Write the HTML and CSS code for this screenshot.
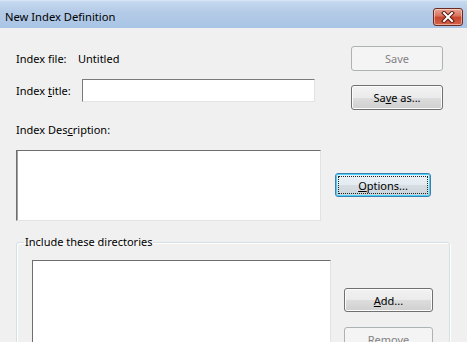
FILE: index.html
```html
<!DOCTYPE html>
<html>
<head>
<meta charset="utf-8">
<link rel="stylesheet" href="styles.css">
</head>
<body>
<div class="window">
  <div class="titlebar">
    <span class="title">New Index Definition</span>
    <span class="close">
      <svg width="18" height="12" viewBox="0 0 18 12">
        <path d="M5 2 L13 10 M13 2 L5 10" stroke="#5a1a10" stroke-width="4" stroke-linecap="square"/>
        <path d="M5 2 L13 10 M13 2 L5 10" stroke="#ffffff" stroke-width="2" stroke-linecap="square"/>
      </svg>
    </span>
  </div>
  <div class="content">
    <div class="row row1">
      <span class="label label1">Index file:</span>
      <span class="value">Untitled</span>
      <span class="spacer"></span>
      <button class="btn disabled wide">Save</button>
    </div>
    <div class="row row2">
      <span class="label label2">Index <u>t</u>itle:</span>
      <span class="input"></span>
      <span class="spacer"></span>
      <button class="btn wide saveas">Sa<u>v</u>e as...</button>
    </div>
    <div class="desc-label">Index Des<u>c</u>ription:</div>
    <div class="row row3">
      <span class="textarea"></span>
      <button class="btn focused options"><span class="focus"><u>O</u>ptions...</span></button>
    </div>
    <fieldset class="group">
      <legend>Include these directories</legend>
      <div class="group-body">
        <span class="listbox"></span>
        <div class="group-buttons">
          <button class="btn"><u>A</u>dd...</button>
          <button class="btn disabled">Remove</button>
        </div>
      </div>
    </fieldset>
  </div>
</div>
</body>
</html>
```
FILE: styles.css
```css
* { box-sizing: border-box; }
html, body { margin: 0; padding: 0; }
body {
  width: 467px;
  height: 342px;
  overflow: hidden;
  background: #f0f0f0;
  font-family: "Noto Sans", "Open Sans", sans-serif;
  font-size: 11px;
  color: #000;
}
.window { width: 467px; height: 342px; overflow: hidden; }
.titlebar {
  height: 28px;
  display: flex;
  align-items: center;
  justify-content: space-between;
  padding: 0 4px 0 5px;
  background: linear-gradient(#c6d9ef, #b4cbe7 40%, #a9c4e5);
  border-top: 1px solid #d6e4f3;
}
.title { font-size: 11.2px; color: #000; margin-top: 3px; }
.close {
  width: 30px;
  height: 18px;
  margin-top: 5px;
  border: 1px solid #6b2a22;
  border-radius: 3px;
  background: linear-gradient(#e8a493, #d9715b 45%, #c7452c 50%, #d4634a);
  box-shadow: inset 0 0 0 1px rgba(255,255,255,0.45);
  display: flex;
  align-items: center;
  justify-content: center;
}
.content { padding-left: 16px; }
.row { display: flex; }
.spacer { flex: 1; }
.row1 { margin-top: 18px; height: 25px; align-items: center; width: 427px; }
.label1 { width: 62px; }
.row2 { margin-top: 8px; width: 427px; align-items: flex-start; }
.label2 { width: 66px; margin-top: 4px; }
.input {
  width: 233px;
  height: 23px;
  background: #fff;
  border: 1px solid;
  border-color: #7a7a7a #e3e3e3 #e3e3e3 #7a7a7a;
}
.saveas { margin-top: 6px; }
.desc-label { margin-top: 12px; line-height: 16px; }
.row3 { margin-top: 12px; align-items: flex-start; }
.textarea {
  width: 305px;
  height: 71px;
  background: #fff;
  border: 1px solid;
  border-color: #6e6e6e #e3e3e3 #e3e3e3 #6e6e6e;
  box-shadow: inset 1px 0 0 #a0a0a0;
}
.btn {
  font-family: inherit;
  font-size: 11px;
  color: #000;
  height: 25px;
  width: 89px;
  padding: 0;
  border: 1px solid #707070;
  border-radius: 3px;
  background: linear-gradient(#f2f2f2, #ebebeb 50%, #dddddd 51%, #cfcfcf);
  box-shadow: inset 0 0 0 1px #fcfcfc;
  display: flex;
  align-items: center;
  justify-content: center;
}
.wide { width: 92px; }
.disabled {
  color: #838383;
  border-color: #adb2b5;
  background: #f4f4f4;
  box-shadow: none;
}
.options {
  width: 96px;
  height: 24px;
  margin-left: 14px;
  margin-top: 23px;
  border-color: #3c7fb1;
  background: linear-gradient(#eaf2f8, #e3ebf1 50%, #d6dde3 51%, #ccd3d9);
  box-shadow: inset 0 0 0 1px #48d1f9;
  padding: 2px;
}
.focus {
  width: 100%;
  height: 100%;
  outline: 1px dotted #222;
  outline-offset: -1px;
  display: flex;
  align-items: center;
  justify-content: center;
}
.group {
  margin: 14px 0 0 0;
  width: 434px;
  height: 140px;
  padding: 0 0 0 15px;
  border: 1px solid #d5dfe5;
  border-radius: 3px;
  box-shadow: inset 1px 1px 0 #ffffff, 1px 1px 0 #ffffff;
}
.group legend { padding: 0 1px; margin-left: -8px; line-height: 14px; }
.group-body { display: flex; margin-top: 11px; }
.listbox {
  width: 299px;
  height: 90px;
  background: #fff;
  border: 1px solid;
  border-color: #6e6e6e #e3e3e3 #e3e3e3 #6e6e6e;
}
.group-buttons {
  display: flex;
  flex-direction: column;
  gap: 15px;
  margin-left: 13px;
  margin-top: 28px;
}
.group-buttons .btn { width: 89px; height: 24px; }
```
